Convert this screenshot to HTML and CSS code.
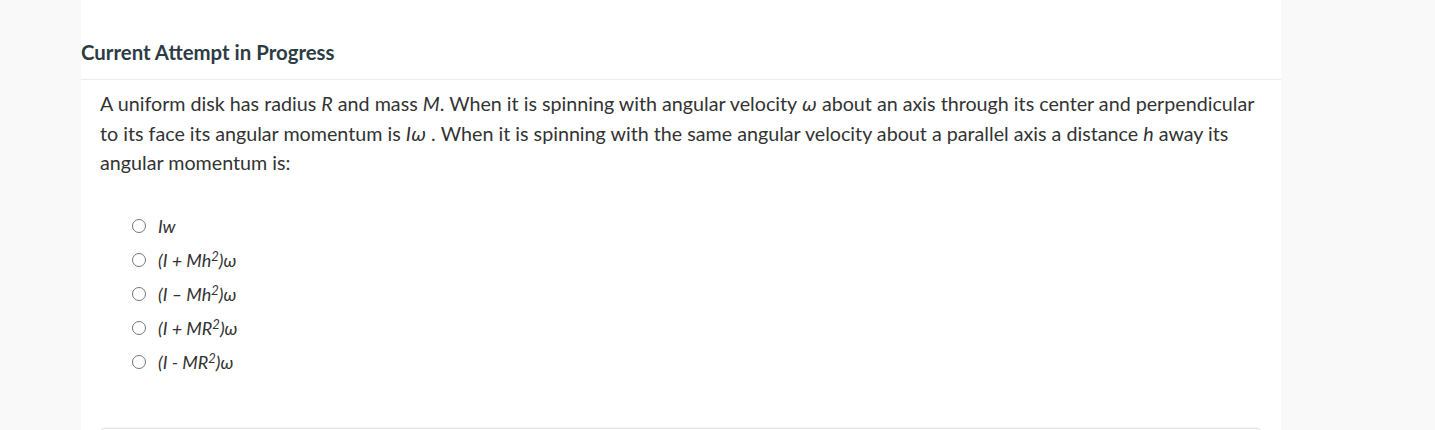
FILE: index.html
```html
<!DOCTYPE html>
<html lang="en">
<head>
<meta charset="utf-8">
<title>Current Attempt in Progress</title>
<link rel="stylesheet" href="styles.css">
</head>
<body>
<main class="card">
  <h2 class="card-title">Current Attempt in Progress</h2>
  <section class="question">
    <p class="question-text">A uniform disk has radius <i>R</i> and mass <i>M</i>. When it is spinning with angular velocity <i class="math">ω</i> about an axis through its center and perpendicular to its face its angular momentum is <i>I</i><i class="math">ω</i> . When it is spinning with the same angular velocity about a parallel axis a distance <i>h</i> away its angular momentum is:</p>
    <ul class="options">
      <li class="option"><span class="radio"></span><span class="opt-label"><i>Iw</i></span></li>
      <li class="option"><span class="radio"></span><span class="opt-label"><i>(I + Mh<sup>2</sup>)ω</i></span></li>
      <li class="option"><span class="radio"></span><span class="opt-label"><i>(I – Mh<sup>2</sup>)ω</i></span></li>
      <li class="option"><span class="radio"></span><span class="opt-label"><i>(I + MR<sup>2</sup>)ω</i></span></li>
      <li class="option"><span class="radio"></span><span class="opt-label"><i>(I - MR<sup>2</sup>)ω</i></span></li>
    </ul>
  </section>
  <div class="next-box"></div>
</main>
</body>
</html>
```
FILE: styles.css
```css
* { box-sizing: border-box; }
html, body { margin: 0; padding: 0; }
body {
  background: #f9f9f9;
  font-family: Lato, "Open Sans", "Liberation Sans", sans-serif;
  color: #2d3b45;
  height: 430px;
  overflow: hidden;
}
.card {
  margin-left: 81px;
  width: 1200px;
  min-height: 430px;
  background: #fff;
  padding-top: 40px;
}
.card-title {
  margin: 0;
  font-size: 20.4px;
  font-weight: 700;
  line-height: 24px;
  padding-bottom: 15px;
  border-bottom: 1px solid #ececec;
}
.question {
  padding: 10px 19px 0 19px;
}
.question-text {
  margin: 0;
  font-size: 19.7px;
  line-height: 28.5px;
  color: #333;
}
.question-text i { font-style: italic; }
.math { font-family: "DejaVu Sans", sans-serif; font-size: 18px; }
.options {
  list-style: none;
  margin: 31px 0 0 0;
  padding: 0 0 0 32px;
}
.option {
  display: flex;
  align-items: center;
  height: 34px;
  font-size: 18px;
  color: #333;
}
.radio {
  width: 14px;
  height: 14px;
  border: 1.5px solid #767676;
  border-radius: 50%;
  margin-right: 12px;
  flex: none;
}
.opt-label sup {
  font-size: 13px;
  line-height: 0;
  vertical-align: 6px;
}
.next-box {
  margin: 49px 19px 0 19px;
  height: 20px;
  border: 1px solid #e3e3e3;
  border-radius: 5px 5px 0 0;
  box-shadow: 0 -1px 2px rgba(0,0,0,0.04);
}
```
